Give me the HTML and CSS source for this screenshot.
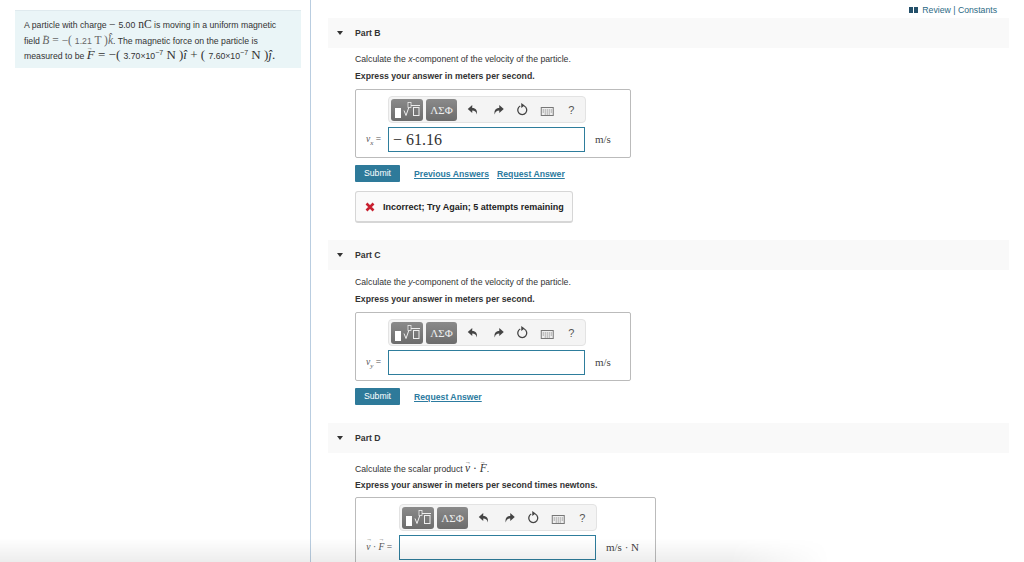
FILE: index.html
```html
<!DOCTYPE html>
<html lang="en">
<head>
  <meta charset="UTF-8">
  <title>Particle in a magnetic field</title>
  <link rel="stylesheet" href="styles.css">
</head>
<body>

<div class="page">
  <div class="sidebar">
    <div class="prompt">
      <div>A particle with charge <span class="math">&minus; <span class="sans">5.00</span> nC</span> is moving in a uniform magnetic</div>
      <div>field <span class="math light"><i class="vec">B</i> = &minus;( <span class="sans">1.21</span> T )<i>k&#770;</i></span>. The magnetic force on the particle is</div>
      <div>measured to be <span class="math big"><i class="vec">F</i> = &minus;( <span class="sans">3.70&times;10<sup>&minus;7</sup></span> N )<i>i&#770;</i> + ( <span class="sans">7.60&times;10<sup>&minus;7</sup></span> N )<i>j&#770;</i>.</span></div>
    </div>
  </div>

  <div class="main">
    <div class="top-links">
      <svg class="book" width="9" height="6" viewBox="0 0 9 6"><rect width="4" height="6"/><rect x="5" width="4" height="6"/></svg>
      <a>Review</a> | <a>Constants</a>
    </div>

    <div class="part">
      <div class="part-head"><span class="arrow"></span>Part B</div>
      <div class="part-body part-b">
        <p class="question">Calculate the <i>x</i>-component of the velocity of the particle.</p>
        <p class="express">Express your answer in meters per second.</p>
        <div class="answer-box">
          <div class="answer-tools">
            <div class="toolbar">
              <span class="tool-btn tpl"><span class="block"></span><svg width="18" height="18" viewBox="0 0 18 18"><path d="M2 9.500l2 5 3.500-10H18" fill="none" stroke="#eee"/><rect x="6" y="1.500" width="3" height="5" fill="#777" stroke="#eee" stroke-width="0.800"/><rect x="11.500" y="6.500" width="5.500" height="8" fill="none" stroke="#eee"/></svg></span>
              <span class="tool-btn sym">&Lambda;&Sigma;&Phi;</span>
              <span class="tool-icons">
                <svg width="12" height="12" viewBox="0 0 12 12"><path d="M5 1L0.500 5 5 9V6.500c2.500 0 4 1 4.500 4 1-4-1-6.500-4.500-6.500z" fill="#444"/></svg>
                <svg width="12" height="12" viewBox="0 0 12 12"><path d="M7 1l4.500 4L7 9V6.500c-2.500 0-4 1-4.500 4-1-4 1-6.500 4.500-6.500z" fill="#444"/></svg>
                <svg width="12" height="13" viewBox="0 0 12 13"><path d="M4 3a4.500 4.500 0 1 0 4 0" fill="none" stroke="#444" stroke-width="1.300"/><path d="M5 0l3.500 2.500L5 5z" fill="#444"/></svg>
                <svg class="keys" width="13" height="9" viewBox="0 0 13 9"><rect x="0.500" y="0.500" width="12" height="8" fill="#eee" stroke="#777"/><path d="M2 3h9M2 5h9M4 7h5" stroke="#777" stroke-dasharray="1 1"/></svg>
                <span class="help">?</span>
              </span>
            </div>
          </div>
          <div class="answer-row">
            <span class="var"><i>v<sub>x</sub></i> =</span>
            <div class="input">&minus; 61.16</div>
            <span class="unit">m/s</span>
          </div>
        </div>
        <div class="actions">
          <span class="submit">Submit</span>
          <a class="link">Previous Answers</a>
          <a class="link">Request Answer</a>
        </div>
        <div class="feedback">
          <svg width="10" height="10" viewBox="0 0 10 10"><path d="M1.500 1.500l7 7M8.500 1.500l-7 7" stroke="#c8202f" stroke-width="2.600"/></svg>
          Incorrect; Try Again; 5 attempts remaining
        </div>
      </div>
    </div>

    <div class="part">
      <div class="part-head"><span class="arrow"></span>Part C</div>
      <div class="part-body part-c">
        <p class="question">Calculate the <i>y</i>-component of the velocity of the particle.</p>
        <p class="express">Express your answer in meters per second.</p>
        <div class="answer-box">
          <div class="answer-tools">
            <div class="toolbar">
              <span class="tool-btn tpl"><span class="block"></span><svg width="18" height="18" viewBox="0 0 18 18"><path d="M2 9.500l2 5 3.500-10H18" fill="none" stroke="#eee"/><rect x="6" y="1.500" width="3" height="5" fill="#777" stroke="#eee" stroke-width="0.800"/><rect x="11.500" y="6.500" width="5.500" height="8" fill="none" stroke="#eee"/></svg></span>
              <span class="tool-btn sym">&Lambda;&Sigma;&Phi;</span>
              <span class="tool-icons">
                <svg width="12" height="12" viewBox="0 0 12 12"><path d="M5 1L0.500 5 5 9V6.500c2.500 0 4 1 4.500 4 1-4-1-6.500-4.500-6.500z" fill="#444"/></svg>
                <svg width="12" height="12" viewBox="0 0 12 12"><path d="M7 1l4.500 4L7 9V6.500c-2.500 0-4 1-4.500 4-1-4 1-6.500 4.500-6.500z" fill="#444"/></svg>
                <svg width="12" height="13" viewBox="0 0 12 13"><path d="M4 3a4.500 4.500 0 1 0 4 0" fill="none" stroke="#444" stroke-width="1.300"/><path d="M5 0l3.500 2.500L5 5z" fill="#444"/></svg>
                <svg class="keys" width="13" height="9" viewBox="0 0 13 9"><rect x="0.500" y="0.500" width="12" height="8" fill="#eee" stroke="#777"/><path d="M2 3h9M2 5h9M4 7h5" stroke="#777" stroke-dasharray="1 1"/></svg>
                <span class="help">?</span>
              </span>
            </div>
          </div>
          <div class="answer-row">
            <span class="var"><i>v<sub>y</sub></i> =</span>
            <div class="input"></div>
            <span class="unit">m/s</span>
          </div>
        </div>
        <div class="actions">
          <span class="submit">Submit</span>
          <a class="link">Request Answer</a>
        </div>
      </div>
    </div>

    <div class="part">
      <div class="part-head"><span class="arrow"></span>Part D</div>
      <div class="part-body part-d">
        <p class="question">Calculate the scalar product <span class="math"><i class="vec">v</i> &middot; <i class="vec">F</i></span>.</p>
        <p class="express">Express your answer in meters per second times newtons.</p>
        <div class="answer-box wide">
          <div class="answer-tools">
            <div class="toolbar">
              <span class="tool-btn tpl"><span class="block"></span><svg width="18" height="18" viewBox="0 0 18 18"><path d="M2 9.500l2 5 3.500-10H18" fill="none" stroke="#eee"/><rect x="6" y="1.500" width="3" height="5" fill="#777" stroke="#eee" stroke-width="0.800"/><rect x="11.500" y="6.500" width="5.500" height="8" fill="none" stroke="#eee"/></svg></span>
              <span class="tool-btn sym">&Lambda;&Sigma;&Phi;</span>
              <span class="tool-icons">
                <svg width="12" height="12" viewBox="0 0 12 12"><path d="M5 1L0.500 5 5 9V6.500c2.500 0 4 1 4.500 4 1-4-1-6.500-4.500-6.500z" fill="#444"/></svg>
                <svg width="12" height="12" viewBox="0 0 12 12"><path d="M7 1l4.500 4L7 9V6.500c-2.500 0-4 1-4.500 4-1-4 1-6.500 4.500-6.500z" fill="#444"/></svg>
                <svg width="12" height="13" viewBox="0 0 12 13"><path d="M4 3a4.500 4.500 0 1 0 4 0" fill="none" stroke="#444" stroke-width="1.300"/><path d="M5 0l3.500 2.500L5 5z" fill="#444"/></svg>
                <svg class="keys" width="13" height="9" viewBox="0 0 13 9"><rect x="0.500" y="0.500" width="12" height="8" fill="#eee" stroke="#777"/><path d="M2 3h9M2 5h9M4 7h5" stroke="#777" stroke-dasharray="1 1"/></svg>
                <span class="help">?</span>
              </span>
            </div>
          </div>
          <div class="answer-row">
            <span class="var"><i class="vec">v</i> &middot; <i class="vec">F</i> =</span>
            <div class="input"></div>
            <span class="unit">m/s &middot; N</span>
          </div>
        </div>
      </div>
    </div>
  </div>
</div>

<div class="bottom-shade"></div>

</body>
</html>
```

FILE: styles.css
```css
html, body {
  margin: 0;
  height: 562px;
  overflow: hidden;
  background: white;
}
body {
  font-family: "Liberation Sans", Arial, sans-serif;
  font-size: 8.7px;
  color: #333;
}
.page {
  display: flex;
  height: 562px;
  overflow: hidden;
}
.sidebar {
  width: 311px;
  flex-shrink: 0;
  box-sizing: border-box;
  border-right: 1px solid #b9cde0;
  padding: 10px 9px 0 15px;
}
.prompt {
  background: #eaf5f7;
  border-top: 1px solid #dfeaee;
  height: 58px;
  box-sizing: border-box;
  padding: 6px 9px;
  line-height: 14.5px;
  white-space: nowrap;
}
.math {
  font-family: "Liberation Serif", serif;
  font-size: 11.5px;
}
.math.light {
  color: #666;
}
.math.big {
  font-size: 13px;
}
.sans {
  font-family: "Liberation Sans", Arial, sans-serif;
  font-size: 8.7px;
}
.vec {
  position: relative;
}
.vec::before {
  content: "\2192";
  position: absolute;
  left: 0;
  top: -6px;
  font-size: 6px;
  font-style: normal;
}
sup {
  font-size: 7px;
  line-height: 0;
}
.main {
  flex: 1;
  padding-left: 17px;
  padding-right: 15px;
  min-width: 0;
}
.top-links {
  height: 18px;
  box-sizing: border-box;
  padding: 5px 12px 0 0;
  text-align: right;
  color: #2c6a84;
  line-height: 11px;
}
.book {
  fill: #24506a;
  margin-right: 2px;
}
.part-head {
  height: 30px;
  background: #f9f9f9;
  font-weight: bold;
  line-height: 30px;
  display: flex;
  align-items: center;
}
.arrow {
  width: 0;
  height: 0;
  border-left: 3.5px solid transparent;
  border-right: 3.5px solid transparent;
  border-top: 4px solid #333;
  margin: 0 12px 0 9px;
}
.part-body {
  padding: 0 0 0 27px;
}
.part-b {
  height: 192px;
}
.part-c {
  height: 153px;
}
.question {
  margin: 0;
  padding-top: 5px;
  height: 16px;
  line-height: 12px;
}
.part-c .question {
  padding-top: 6px;
}
.part-d .question {
  padding-top: 9px;
  height: 16px;
}
.express {
  margin: 0;
  padding-top: 1px;
  height: 19px;
  line-height: 12px;
  font-weight: bold;
}
.part-d .express {
  height: 18px;
}
.answer-box {
  width: 276px;
  height: 69px;
  box-sizing: border-box;
  border: 1px solid #bbb;
  border-radius: 2px;
  padding: 6px 0 0 32px;
}
.answer-box.wide {
  width: 301px;
  height: 80px;
  padding-left: 43px;
}
.answer-tools {
  height: 31px;
}
.toolbar {
  display: inline-flex;
  align-items: center;
  box-sizing: border-box;
  width: 198px;
  height: 27px;
  background: #f4f4f4;
  border: 1px solid #e3e3e3;
  border-radius: 4px;
  padding-left: 2px;
}
.tool-btn {
  display: flex;
  align-items: center;
  justify-content: center;
  height: 22px;
  background: linear-gradient(#8a8a8a, #6c6c6c);
  border-radius: 3px;
  color: #eee;
}
.tpl {
  width: 32px;
  margin-right: 3px;
}
.block {
  width: 6px;
  height: 10px;
  background: white;
  margin: 6px 1px 0 0;
}
.sym {
  width: 31px;
  font-family: "Liberation Serif", serif;
  font-size: 11px;
}
.tool-icons {
  display: flex;
  align-items: center;
  padding-left: 4px;
}
.tool-icons svg, .help {
  flex: 0 0 24.5px;
  text-align: center;
}
.keys {
  margin-top: 3px;
}
.help {
  font-size: 11px;
  color: #555;
}
.answer-row {
  display: flex;
  align-items: center;
  height: 25px;
  position: relative;
}
.var {
  position: absolute;
  right: 100%;
  margin-right: 7px;
  margin-bottom: 2px;
  white-space: nowrap;
  font-family: "Liberation Serif", serif;
  font-size: 9.5px;
  color: #555;
}
sub {
  font-size: 7px;
  line-height: 0;
}
.input {
  width: 197px;
  height: 25px;
  box-sizing: border-box;
  border: 1px solid #2e7d9c;
  font-family: "Liberation Serif", serif;
  font-size: 16px;
  line-height: 23px;
  padding-left: 4px;
  color: #333;
  flex-shrink: 0;
}
.unit {
  font-family: "Liberation Serif", serif;
  font-size: 11px;
  margin-left: 10px;
  margin-bottom: 2px;
  color: #444;
  white-space: nowrap;
}
.actions {
  margin-top: 7px;
  display: flex;
  align-items: center;
  height: 17px;
}
.submit {
  width: 45px;
  height: 17px;
  background: #2e7a9a;
  color: white;
  text-align: center;
  line-height: 17px;
  border-radius: 1px;
  margin-right: 14px;
}
.link {
  color: #2c7ba0;
  text-decoration: underline;
  font-weight: bold;
  margin-right: 8px;
}
.feedback {
  margin-top: 9px;
  width: 218px;
  height: 32px;
  box-sizing: border-box;
  border: 1px solid #d6d6d6;
  border-bottom-width: 2px;
  border-radius: 3px;
  background: #fafafa;
  display: flex;
  align-items: center;
  gap: 8px;
  padding-left: 9px;
  font-size: 9px;
  font-weight: bold;
  color: #222;
  white-space: nowrap;
}
.bottom-shade {
  position: fixed;
  left: 0;
  bottom: 0;
  width: 830px;
  height: 24px;
  background: linear-gradient(transparent, rgba(0, 0, 0, 0.07));
  mask-image: linear-gradient(to right, black 88%, transparent);
}
```
